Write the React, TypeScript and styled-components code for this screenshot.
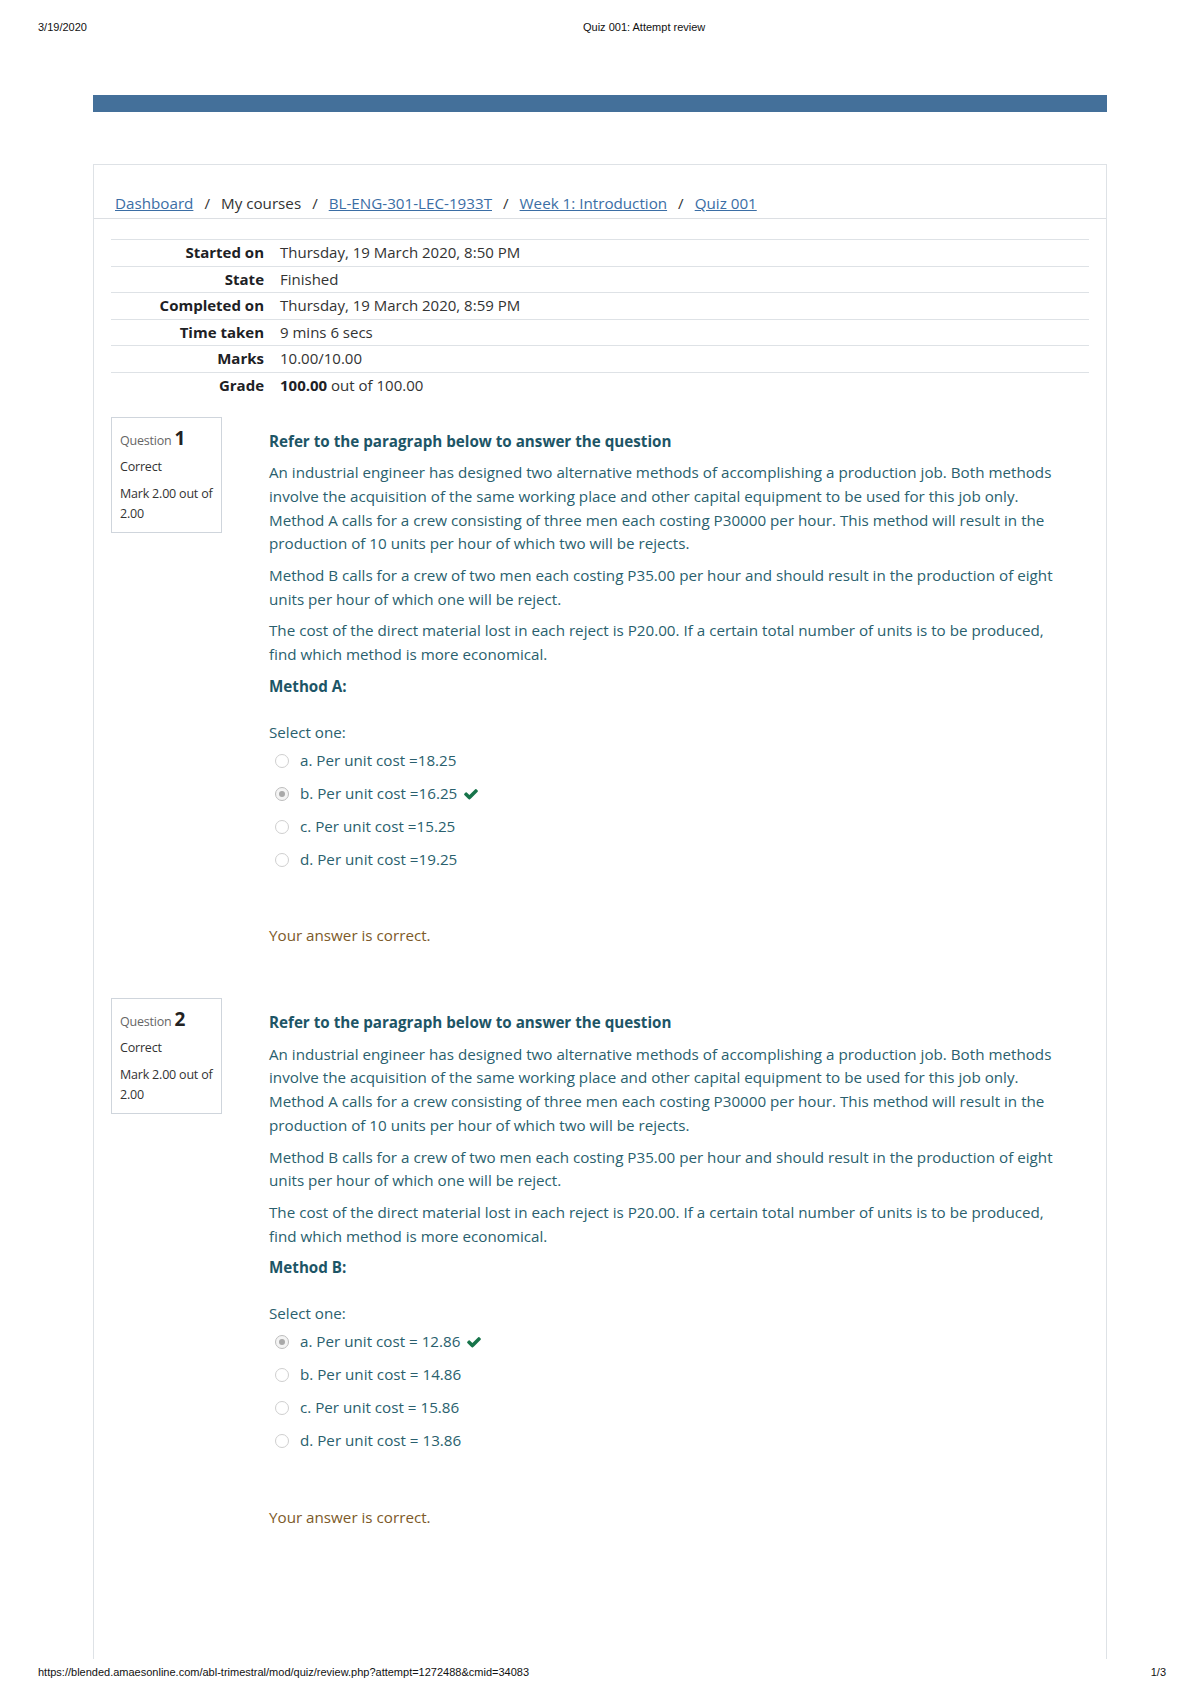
import React from 'react';
import styled, { createGlobalStyle } from 'styled-components';

const GlobalStyle = createGlobalStyle`
    html, body {
        margin: 0;
        padding: 0;
        background: #fff;
    }
    body {
        font-family: "Open Sans", "Noto Sans", sans-serif;
    }
`;

const Page = styled.div`
    display: flex;
    flex-direction: column;
    height: 1697px;
`;

const PrintHeader = styled.div`
    display: grid;
    grid-template-columns: 545px auto;
    padding: 20px 38px 0;
    font-family: "Liberation Sans", Arial, sans-serif;
    font-size: 11px;
    line-height: 14px;
    color: #111;
`;

const PrintFooter = styled.div`
    display: flex;
    justify-content: space-between;
    padding: 0 34px 18px 38px;
    font-family: "Liberation Sans", Arial, sans-serif;
    font-size: 11px;
    line-height: 14px;
    color: #111;
`;

const Banner = styled.div`
    margin: 61px 93px 0;
    height: 17px;
    background-color: #44709a;
`;

const Card = styled.main`
    flex: 1;
    margin: 52px 93px 6px;
    border: 1px solid #dee2e6;
    border-bottom: none;
    background: #fff;
`;

const Breadcrumb = styled.nav`
    display: flex;
    align-items: center;
    padding: 26px 21px 3px;
    border-bottom: 1px solid #dcdfe3;
    font-size: 15.2px;
    line-height: 24px;
    color: #333;
`;

const Crumb = styled.a`
    color: #3b6ea5;
    text-decoration: underline;
`;

const Sep = styled.span`
    margin: 0 11px;
    color: #333;
`;

const Summary = styled.div`
    margin: 20px 17px 18px;
`;

const SummaryRow = styled.div`
    display: grid;
    grid-template-columns: 161px 1fr;
    border-top: 1px solid #dee2e6;
    font-size: 15px;
    line-height: 25.6px;
    color: #333;
`;

const SummaryLabel = styled.div`
    text-align: right;
    padding-right: 8px;
    font-weight: 700;
    color: #1d2125;
`;

const SummaryValue = styled.div`
    padding-left: 8px;
    & b {
        font-weight: 700;
        color: #1d2125;
    }
`;

const Question = styled.section`
    display: flex;
    align-items: flex-start;
    margin: 0 17px;
`;

const Info = styled.div`
    flex: 0 0 111px;
    box-sizing: border-box;
    border: 1px solid #cfd5dc;
    padding: 8px 3px 8px 8px;
    font-size: 12.5px;
    letter-spacing: -0.2px;
    line-height: 20px;
    color: #333;
`;

const QTitle = styled.h3`
    margin: 0;
    font-size: 12.5px;
    font-weight: 400;
    line-height: 24px;
    color: #666;
    & span {
        font-size: 19px;
        font-weight: 700;
        color: #222;
        margin-left: 3px;
    }
`;

const InfoLine = styled.div<{ $gap: number }>`
    margin-top: ${p => p.$gap}px;
`;

const Content = styled.div`
    margin-left: 47px;
    padding-top: 13px;
    width: 797px;
    font-size: 15.2px;
    line-height: 23.7px;
    color: #2a5f6e;
`;

const Lead = styled.p`
    margin: 0 0 8px;
    font-weight: 700;
    color: #1d5566;
`;

const Para = styled.p`
    margin: 0 0 8px;
`;

const MethodLabel = styled.p`
    margin: 0 0 22px;
    font-weight: 700;
    color: #1d5566;
`;

const Prompt = styled.div`
    margin: 0;
`;

const Options = styled.div`
    display: flex;
    flex-direction: column;
`;

const Option = styled.div`
    display: flex;
    align-items: center;
    height: 33px;
    padding-left: 6px;
`;

const Radio = styled.span<{ $checked?: boolean }>`
    position: relative;
    display: inline-block;
    width: 14px;
    height: 14px;
    margin-right: 11px;
    box-sizing: border-box;
    border-radius: 50%;
    border: 1px solid ${p => (p.$checked ? '#bdbdbd' : '#cfcfcf')};
    background: ${p => (p.$checked ? '#f4f4f4' : '#fff')};
    &::after {
        content: '';
        display: ${p => (p.$checked ? 'block' : 'none')};
        position: absolute;
        top: 3px;
        left: 3px;
        width: 6px;
        height: 6px;
        border-radius: 50%;
        background: #a9a9a9;
    }
`;

const Check = styled.svg`
    width: 16px;
    height: 16px;
    margin-left: 6px;
    fill: #17744a;
`;

const Outcome = styled.div`
    margin: 48px 0 50px;
    color: #7d5a29;
`;

type QuestionData = {
    no: number;
    method: string;
    options: string[];
    answer: number;
};

const questions: QuestionData[] = [
    {
        no: 1,
        method: 'Method A:',
        options: [
            'a. Per unit cost =18.25',
            'b. Per unit cost =16.25',
            'c. Per unit cost =15.25',
            'd. Per unit cost =19.25',
        ],
        answer: 1,
    },
    {
        no: 2,
        method: 'Method B:',
        options: [
            'a. Per unit cost = 12.86',
            'b. Per unit cost = 14.86',
            'c. Per unit cost = 15.86',
            'd. Per unit cost = 13.86',
        ],
        answer: 0,
    },
];

const summary: [string, React.ReactNode][] = [
    ['Started on', 'Thursday, 19 March 2020, 8:50 PM'],
    ['State', 'Finished'],
    ['Completed on', 'Thursday, 19 March 2020, 8:59 PM'],
    ['Time taken', '9 mins 6 secs'],
    ['Marks', '10.00/10.00'],
    ['Grade', <><b>100.00</b> out of 100.00</>],
];

const CheckIcon = () => (
    <Check viewBox="0 0 1792 1792">
        <path d="M1671 566q0 40-28 68l-724 724-136 136q-28 28-68 28t-68-28l-136-136-362-362q-28-28-28-68t28-68l136-136q28-28 68-28t68 28l294 295 656-657q28-28 68-28t68 28l136 136q28 28 28 68z" />
    </Check>
);

const QuestionBlock: React.FC<{ q: QuestionData }> = ({ q }) => (
    <Question>
        <Info>
            <QTitle>
                Question<span>{q.no}</span>
            </QTitle>
            <InfoLine $gap={4}>Correct</InfoLine>
            <InfoLine $gap={7}>Mark 2.00 out of 2.00</InfoLine>
        </Info>
        <Content>
            <Lead>Refer to the paragraph below to answer the question</Lead>
            <Para>
                An industrial engineer has designed two alternative methods of accomplishing a production job. Both
                methods involve the acquisition of the same working place and other capital equipment to be used for
                this job only. Method A calls for a crew consisting of three men each costing P30000 per hour. This
                method will result in the production of 10 units per hour of which two will be rejects.
            </Para>
            <Para>
                Method B calls for a crew of two men each costing P35.00 per hour and should result in the production
                of eight units per hour of which one will be reject.
            </Para>
            <Para>
                The cost of the direct material lost in each reject is P20.00. If a certain total number of units is to
                be produced, find which method is more economical.
            </Para>
            <MethodLabel>{q.method}</MethodLabel>
            <Prompt>Select one:</Prompt>
            <Options>
                {q.options.map((opt, i) => (
                    <Option key={opt}>
                        <Radio $checked={i === q.answer} />
                        {opt}
                        {i === q.answer && <CheckIcon />}
                    </Option>
                ))}
            </Options>
            <Outcome>Your answer is correct.</Outcome>
        </Content>
    </Question>
);

const App: React.FC = () => {
    return (
        <Page>
            <GlobalStyle />
            <PrintHeader>
                <span>3/19/2020</span>
                <span>Quiz 001: Attempt review</span>
            </PrintHeader>
            <Banner />
            <Card>
                <Breadcrumb>
                    <Crumb>Dashboard</Crumb>
                    <Sep>/</Sep>
                    <span>My courses</span>
                    <Sep>/</Sep>
                    <Crumb>BL-ENG-301-LEC-1933T</Crumb>
                    <Sep>/</Sep>
                    <Crumb>Week 1: Introduction</Crumb>
                    <Sep>/</Sep>
                    <Crumb>Quiz 001</Crumb>
                </Breadcrumb>
                <Summary>
                    {summary.map(([label, value]) => (
                        <SummaryRow key={label}>
                            <SummaryLabel>{label}</SummaryLabel>
                            <SummaryValue>{value}</SummaryValue>
                        </SummaryRow>
                    ))}
                </Summary>
                {questions.map(q => (
                    <QuestionBlock key={q.no} q={q} />
                ))}
            </Card>
            <PrintFooter>
                <span>https://blended.amaesonline.com/abl-trimestral/mod/quiz/review.php?attempt=1272488&amp;cmid=34083</span>
                <span>1/3</span>
            </PrintFooter>
        </Page>
    );
};

export default App;
